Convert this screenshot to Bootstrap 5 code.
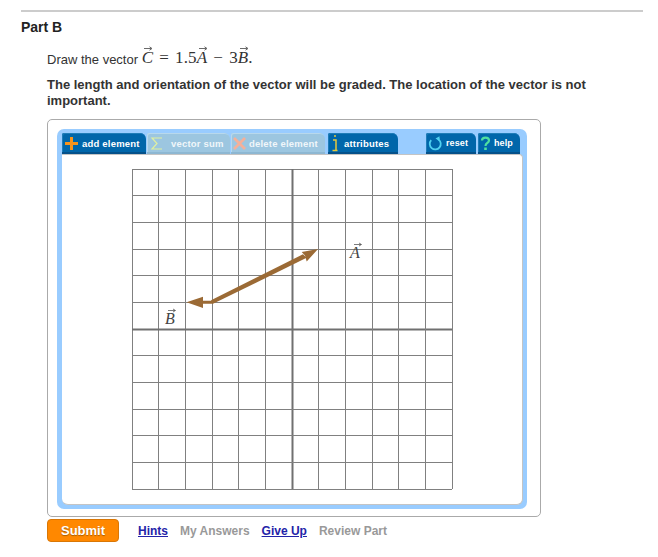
<!DOCTYPE html>
<html lang="en">
<head>
<meta charset="utf-8">
<title>Part B</title>
<link rel="stylesheet" href="https://cdn.jsdelivr.net/npm/bootstrap@5.3.0/dist/css/bootstrap.min.css">
<style>
body{background:#fff;color:#333;font-family:"Liberation Sans",Arial,sans-serif;font-size:13px;line-height:15px}
.page-wrap{padding:10px 15px 0 21px}
.top-rule{height:2px;background:#ccc;margin-bottom:7px}
.part-title{font-size:14px;font-weight:700;color:#222;line-height:16px;margin:0 0 7px}
.part-body{padding-left:26px;width:596px}
.prompt{height:25px;margin:0;display:flex;align-items:flex-end;font-size:13px;white-space:pre}
.math{font-family:"Liberation Serif",serif;font-size:17px;line-height:18px;letter-spacing:.1px;word-spacing:1.800px}
.vec{position:relative;font-style:italic;display:inline-block}
.vec svg{position:absolute;left:50%;margin-left:-3px;top:-3px;width:9px;height:5px}
.note{font-size:13px;font-weight:700;color:#333;margin:10px 0 10px;line-height:16px;width:560px}
.applet-box{width:494px;height:398px;border:1px solid #aaa;border-radius:5px;padding:9px 13px 7px 9px}
.applet{height:380px;background:#9cf;border-radius:7px;padding:4px 4px 4px 5px;display:flex;flex-direction:column}
.toolbar{height:21px;flex:none;display:flex}
.tool{height:21px;display:flex;align-items:center;gap:3px;background:#06a;color:#fff;font-size:9.500px;font-weight:700;letter-spacing:.2px;border-radius:2px 6px 0 0;border-bottom:2px solid #05518a;box-shadow:inset 1px 1px 0 #1f7db8;padding:1px 3px 0 2px;white-space:nowrap;overflow:hidden}
.tool svg{flex:none}
.tool-add{width:84px;margin-right:1px}
.tool-sum{width:83px;background:#9cc6e0;color:#f0f6fa;border-bottom-color:#8db7d2;box-shadow:inset 1px 1px 0 #b8d8ec;margin-right:1px}
.tool-del{width:94px;background:#9cc6e0;color:#f0f6fa;border-bottom-color:#8db7d2;box-shadow:inset 1px 1px 0 #b8d8ec;margin-right:3px}
.tool-attr{width:70px;margin-right:auto;gap:4px}
.tool-reset{width:50px;margin-right:2px;font-size:9px;letter-spacing:.1px}
.tool-help{width:42px;margin-right:3px;font-size:9px;letter-spacing:.1px}
.canvas{flex:1;background:#fff;border:1px solid #c4c4c4;border-width:1px 1px 1px 0;border-radius:0 4px 6px 6px;padding:14px 0 0 70px}
.canvas svg{display:block}
.grid-line{stroke:#808080;stroke-width:1}
.grid-axis{stroke:#707070;stroke-width:2}
.vec-label{font-family:"Liberation Serif",serif;font-style:italic;font-size:16px;fill:#444}
.action-row{margin-top:2px;height:23px;display:flex;align-items:center}
.submit-btn{width:72px;height:23px;padding:0;background:#f80;border:1px solid #d97706;border-radius:4px;color:#fff;font-size:13px;font-weight:700;line-height:21px;text-shadow:0 1px 1px #a85c00;margin-right:19px}
.submit-btn:hover{background:#f80;color:#fff;border-color:#d97706}
.act-link{font-size:12px;font-weight:700;margin-right:12px;padding-top:2px}
a.act-link{color:#2323a8;text-decoration:underline}
span.act-link{color:#999}
</style>
</head>
<body>
<div class="page-wrap">
  <div class="top-rule"></div>
  <h2 class="part-title">Part B</h2>
  <div class="part-body">
    <p class="prompt">Draw the vector <span class="math"><span class="vec">C<svg viewBox="0 0 9 5"><path d="M0 2.500H7M5.500 .8 8 2.500 5.500 4.200" fill="none" stroke="#444" stroke-width=".8"/></svg></span> = 1.5<span class="vec">A<svg viewBox="0 0 9 5"><path d="M0 2.500H7M5.500 .8 8 2.500 5.500 4.200" fill="none" stroke="#444" stroke-width=".8"/></svg></span> &#8722; 3<span class="vec">B<svg viewBox="0 0 9 5"><path d="M0 2.500H7M5.500 .8 8 2.500 5.500 4.200" fill="none" stroke="#444" stroke-width=".8"/></svg></span>.</span></p>
    <p class="note">The length and orientation of the vector will be graded. The location of the vector is not important.</p>
    <div class="applet-box">
      <div class="applet">
        <div class="toolbar">
          <div class="tool tool-add"><svg width="15" height="15" viewBox="0 0 15 15"><path d="M6 1h3v5h5v3H9v5H6V9H1V6h5z" fill="#f7941d"/></svg>add element</div>
          <div class="tool tool-sum"><svg width="15" height="15" viewBox="0 0 15 15"><path d="M13 2H3l5 5.500L3 13h10" fill="none" stroke="#e0f0a0" stroke-width="1.200"/></svg><span class="ms-1">vector sum</span></div>
          <div class="tool tool-del"><svg width="13" height="13" viewBox="0 0 13 13"><path d="M1 1l11 11M12 1L1 12" stroke="#f4b09a" stroke-width="2.800"/></svg>delete element</div>
          <div class="tool tool-attr"><svg width="10" height="17" viewBox="0 0 10 17"><path d="M5 0v2M3 5h3v10M2.500 15.500h5" fill="none" stroke="#e3c83c" stroke-width="1.500"/></svg>attributes</div>
          <div class="tool tool-reset"><svg width="15" height="15" viewBox="0 0 15 15"><path d="M3.200 4.200A5.500 5.500 0 1 0 10.500 3.500V2" fill="none" stroke="#4fd0ef" stroke-width="1.800"/><path d="M11.500 .2V5L7.500 2.500z" fill="#4fd0ef"/></svg>reset</div>
          <div class="tool tool-help"><svg width="11" height="15" viewBox="0 0 11 15"><path d="M2 4.500C2 .6 9 .6 9 4.500 9 7 5.500 7 5.500 10" fill="none" stroke="#4fe0a0" stroke-width="2.200"/><path d="M4.200 11.500h2.600V14H4.200z" fill="#4fe0a0"/></svg>help</div>
        </div>
        <div class="canvas">
          <svg width="322" height="322" viewBox="0 0 322 322" role="img" aria-label="Vector grid">
            <g id="grid"></g>
            <path d="M79 131.200L171 85.200L174.600 88.800L81 134.800Z" fill="#9b6a35"/>
            <path d="M186 80L169.700 83L173 86.500L174.700 92.500Z" fill="#9b6a35"/>
            <path d="M54.500 133.300L71 127.800V131.800H81V134.800H71V139Z" fill="#9b6a35"/>
            <text class="vec-label" x="218" y="89">A</text>
            <path d="M222 75.500h7M227 74l2.500 1.500-2.500 1.500" fill="none" stroke="#444" stroke-width=".7"/>
            <text class="vec-label" x="33" y="155">B</text>
            <path d="M36 141.500h7M41 140l2.500 1.500-2.500 1.500" fill="none" stroke="#444" stroke-width=".7"/>
          </svg>
        </div>
      </div>
    </div>
    <div class="action-row">
      <button class="btn submit-btn" type="button">Submit</button>
      <a class="act-link" href="#">Hints</a>
      <span class="act-link">My Answers</span>
      <a class="act-link" href="#">Give Up</a>
      <span class="act-link">Review Part</span>
    </div>
  </div>
</div>
<script>
var g=document.getElementById('grid'),s='',i,p;
for(i=0;i<=12;i++){p=Math.floor(i*26.6667)+.5;
s+='<line class="'+(i==6?'grid-axis':'grid-line')+'" x1="'+p+'" y1="0" x2="'+p+'" y2="320"/>';
s+='<line class="'+(i==6?'grid-axis':'grid-line')+'" x1="0" y1="'+p+'" x2="320" y2="'+p+'"/>';}
g.innerHTML=s;
</script>
<script src="https://cdn.jsdelivr.net/npm/bootstrap@5.3.0/dist/js/bootstrap.bundle.min.js"></script>
</body>
</html>
